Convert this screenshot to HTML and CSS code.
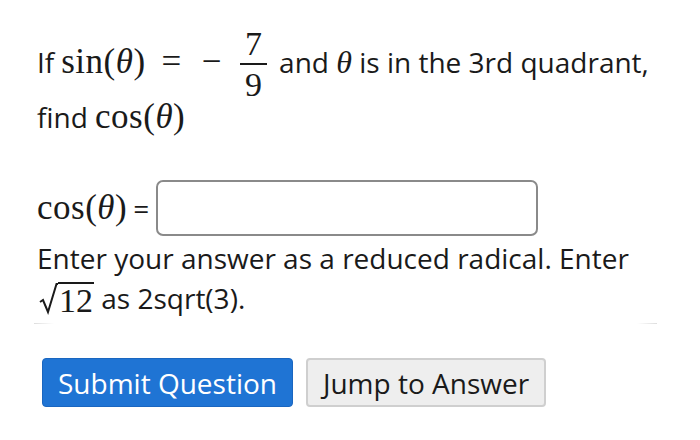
FILE: index.html
```html
<!DOCTYPE html>
<html>
<head>
<meta charset="utf-8">
<link rel="stylesheet" href="styles.css">
</head>
<body>
<div class="page">
  <div class="q-line1">
    <span class="t">If</span>
    <span class="m fn">sin(<i>θ</i>)</span>
    <span class="m op eq">=</span>
    <span class="m op minus">−</span>
    <span class="frac"><span class="num">7</span><span class="bar"></span><span class="den">9</span></span>
    <span class="t">and <i class="mi">θ</i> is in the 3rd quadrant,</span>
  </div>
  <div class="q-line2"><span class="t">find</span> <span class="m">cos(<i>θ</i>)</span></div>

  <div class="answer-row">
    <span class="m">cos(<i>θ</i>)</span>
    <span class="t">=</span>
    <div class="input"></div>
  </div>
  <p class="hint">Enter your answer as a reduced radical. Enter<br><span class="sqrt"><svg class="rad" width="19" height="32" viewBox="0 0 19 32"><path d="M1 19 L4 17 L9 29 L17.5 1 L19 1" fill="none" stroke="#1a1a1a" stroke-width="2" stroke-linejoin="miter"/></svg><span class="radicand">12</span></span> as 2sqrt(3).</p>
  <div class="rule"></div>
  <div class="buttons">
    <button class="btn primary">Submit Question</button>
    <button class="btn secondary">Jump to Answer</button>
  </div>
</div>
</body>
</html>
```
FILE: styles.css
```css
html, body { margin: 0; padding: 0; background: #fff; }
body { font-family: "Open Sans", "Noto Sans", sans-serif; color: #1a1a1a; font-size: 28px; }
.page { padding: 20px 0 0 37px; width: 650px; }
.m { font-family: "Liberation Serif", "DejaVu Serif", serif; font-size: 35px; letter-spacing: 0.5px; }
.m i, .mi { font-family: "Liberation Serif", serif; font-style: italic; }
.mi { font-size: 32px; }
.q-line1 { display: flex; align-items: center; height: 84px; }
.q-line1 .fn { margin-left: 7px; }
.eq { margin-left: 16px; }
.minus { margin-left: 20px; }
.frac { display: inline-flex; flex-direction: column; align-items: center; margin: 0 12px 0 18px; font-family: "Liberation Serif", serif; font-size: 34px; line-height: 30px; padding-top: 4px; }
.frac .bar { width: 27px; height: 2px; background: #1a1a1a; margin: 4px 0 5px; }
.q-line2 { margin-top: -8px; height: 42px; line-height: 42px; }
.answer-row { display: flex; align-items: center; margin-top: 42px; gap: 6px; }
.input { width: 378px; height: 52px; border: 2px solid #8a8a8a; border-radius: 7px; margin-left: 1px; }
.hint { margin: 2px 0 0; line-height: 40px; }
.sqrt { display: inline-flex; align-items: flex-start; vertical-align: -6px; height: 34px; margin-left: 2px; }
.rad { display: block; margin-top: 1px; }
.radicand { font-family: "Liberation Serif", serif; font-size: 34px; line-height: 30px; border-top: 2px solid #1a1a1a; padding: 2px 1px 0 1px; margin-top: 0; }
.rule { height: 1px; margin: 5px 30px 0 -3px; background: linear-gradient(to right, #ddd 0, #fff 20px, #fff calc(100% - 20px), #ddd 100%); }
.buttons { display: flex; gap: 13px; margin-top: 34px; padding-left: 5px; }
.btn { font-family: "Open Sans", "Noto Sans", sans-serif; font-size: 28px; height: 49px; border-radius: 4px; padding: 0; cursor: pointer; }
.primary { background: #1f74d4; color: #fff; border: 1px solid #1a66c0; width: 251px; }
.secondary { background: #eeeeee; color: #1a1a1a; border: 2px solid #cfcfcf; width: 240px; }
```
